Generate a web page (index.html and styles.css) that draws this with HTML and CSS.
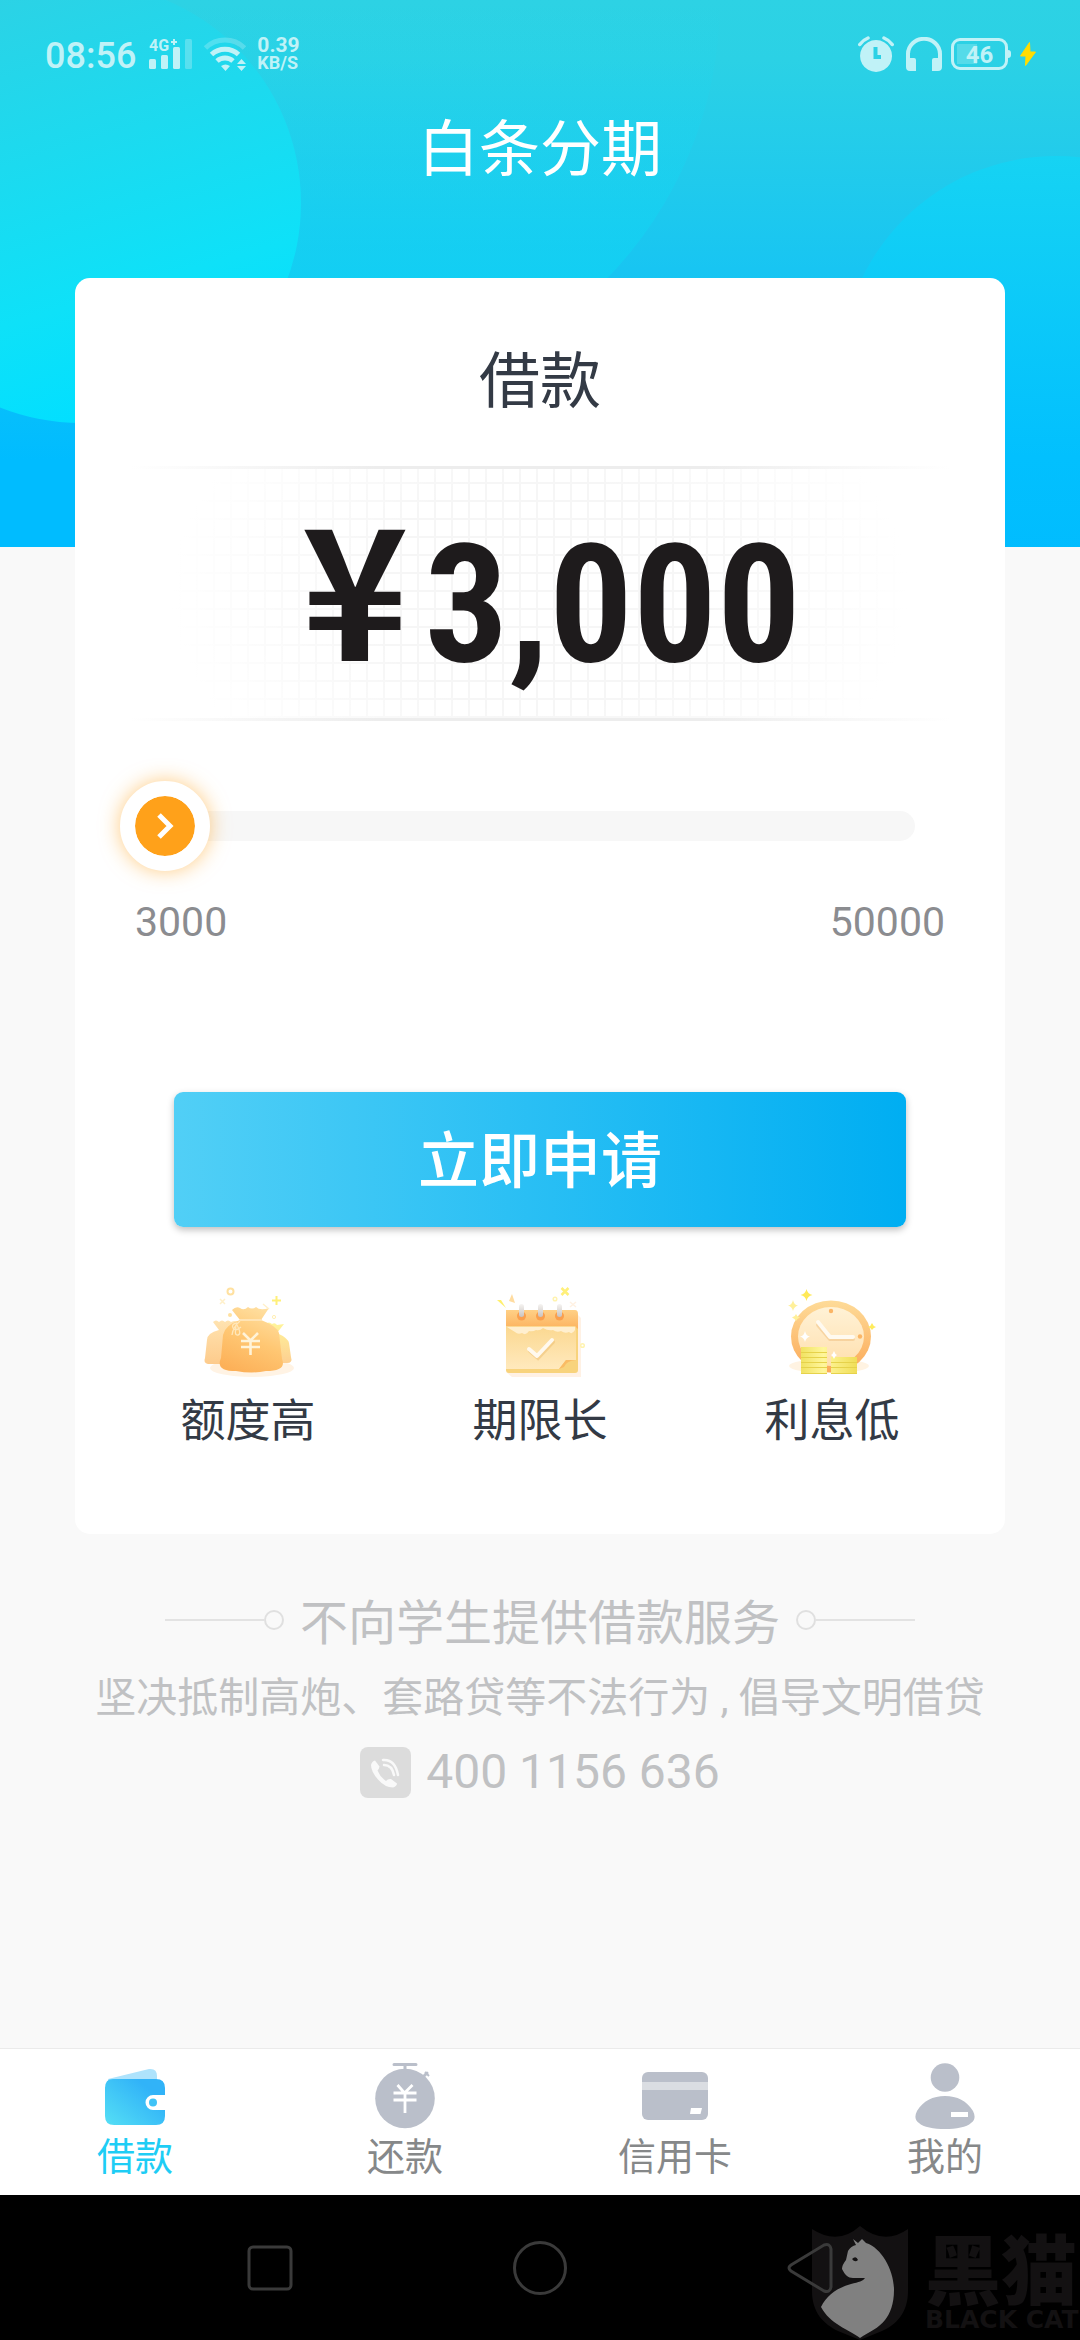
FILE: index.html
```
<!DOCTYPE html>
<html lang="zh-CN">
<head>
  <meta charset="UTF-8">
  <meta name="viewport" content="width=device-width, initial-scale=1">
  <title>白条分期</title>
  <link rel="stylesheet" href="styles.css">
</head>
<body>
  <header class="hero">
    <svg class="hero-bg" viewBox="0 0 1080 547" preserveAspectRatio="xMidYMin slice" aria-hidden="true">
      <defs>
        <linearGradient id="bubbleLeft" x1="0.2" y1="0" x2="0.5" y2="1">
          <stop offset="0.05" stop-color="#2cd2e5"/>
          <stop offset="0.75" stop-color="#0ee1f8"/>
          <stop offset="1" stop-color="#02dfff"/>
        </linearGradient>
        <linearGradient id="bubbleMid" gradientUnits="userSpaceOnUse" x1="0" y1="0" x2="0" y2="300">
          <stop offset="0" stop-color="#18dcf4" stop-opacity="0"/>
          <stop offset="1" stop-color="#0cdaf4" stop-opacity="0.5"/>
        </linearGradient>
        <linearGradient id="bubbleRight" x1="0" y1="0" x2="0" y2="1">
          <stop offset="0" stop-color="#16d3f3"/>
          <stop offset="0.7" stop-color="#02c0fe"/>
          <stop offset="1" stop-color="#00bbff"/>
        </linearGradient>
      </defs>
      <circle cx="320" cy="0" r="400" fill="url(#bubbleMid)"/>
      <circle cx="81" cy="203" r="220" fill="url(#bubbleLeft)"/>
      <circle cx="1056" cy="371" r="215" fill="url(#bubbleRight)"/>
    </svg>

    <div class="status">
      <span class="time">08:56</span>
      <svg class="signal" viewBox="0 0 44 32" aria-hidden="true">
        <text x="0" y="13" class="net-type">4G</text>
        <path d="M22 4h6M25 1v6" stroke="currentColor" stroke-width="2"/>
        <rect x="0" y="21" width="7" height="10" rx="1.5"/>
        <rect x="12" y="17" width="7" height="14" rx="1.5"/>
        <rect x="24" y="9" width="7" height="22" rx="1.5"/>
        <rect x="36" y="1" width="7" height="30" rx="1.5" opacity="0.35"/>
      </svg>
      <svg class="wifi" viewBox="0 0 42 34" aria-hidden="true">
        <g fill="none" stroke="currentColor" stroke-width="5">
          <path d="M1.500 11A28 28 0 0 1 40.500 11" opacity="0.3"/>
          <path d="M7.500 17.500A20 20 0 0 1 34.500 17.500"/>
          <path d="M13 24A12 12 0 0 1 29 24"/>
        </g>
        <path d="M17 29q4.500-3 9 0l-4.500 5zM33 27l4.500-5 4.500 5zM33 29h9l-4.500 5z"/>
      </svg>
      <div class="speed"><span class="rate">0.39</span><span class="unit">KB/S</span></div>
      <div class="status-right">
        <svg class="alarm" viewBox="0 0 36 36" aria-hidden="true">
          <path fill-rule="evenodd" d="M18 4a16 16 0 1 0 .1 0zM15.500 11h4v8h3.500v4h-7.500z"/>
          <path d="M1.800 8.500Q5 4 10 2M34.200 8.500Q31 4 26 2" fill="none" stroke="currentColor" stroke-width="3.500" stroke-linecap="round"/>
        </svg>
        <svg class="headset" viewBox="0 0 36 34" aria-hidden="true">
          <path d="M2 24V17a16 15.200 0 0 1 32 0v7" fill="none" stroke="currentColor" stroke-width="4"/>
          <path d="M0 21h8q2 0 2 2v11H4q-4 0-4-4zM36 21h-8q-2 0-2 2v11h6q4 0 4-4z"/>
        </svg>
        <div class="battery"><span>46</span></div>
        <svg class="bolt" viewBox="0 0 16 24" aria-hidden="true">
          <path d="M9.500 0.500L0.500 14h5.500l-.500 9.500L15.500 10H10z" fill="#ffdc00" stroke="#ffdc00" stroke-linejoin="round"/>
        </svg>
      </div>
    </div>
    <h1>白条分期</h1>
  </header>

  <main>
    <section class="card">
      <h2>借款</h2>
      <div class="amount">
        <span class="yen">¥</span><span class="num">3,000</span>
      </div>

      <div class="range">
        <input type="range" id="loan" min="3000" max="50000" step="100" value="3000" aria-label="借款金额">
        <div class="range-labels"><span>3000</span><span>50000</span></div>
      </div>

      <button class="apply" type="button">立即申请</button>

      <ul class="features">
        <li>
          <svg viewBox="0 0 96 96" aria-hidden="true">
            <defs>
              <linearGradient id="bagFront" x1="0.7" y1="0" x2="0.3" y2="1">
                <stop offset="0" stop-color="#ffe0a2"/>
                <stop offset="0.5" stop-color="#ffc773"/>
                <stop offset="1" stop-color="#fcb058"/>
              </linearGradient>
              <linearGradient id="bagBack" x1="0" y1="0" x2="0" y2="1">
                <stop offset="0" stop-color="#ffe3b0"/>
                <stop offset="1" stop-color="#fdcb8c"/>
              </linearGradient>
              <linearGradient id="bagSide" x1="0" y1="0" x2="0" y2="1">
                <stop offset="0" stop-color="#fff59a"/>
                <stop offset="1" stop-color="#fdcf91"/>
              </linearGradient>
            </defs>
            <ellipse cx="52" cy="84" rx="42" ry="9" fill="#fff3e4"/>
            <path d="M13 38q3-3 6 0q3-3 6 0q3-3 6 0q4-2 8 0l-6 8 6 34H8q-5-1-3-6l2-18q0-7 12-10z" fill="url(#bagBack)"/>
            <path d="M66 40q3-3 6 0q3-2 5 1l7-1-7 9q11 5 12 10l2 14q2 6-4 6H66z" fill="url(#bagSide)"/>
            <path d="M32 26q4-4 8-2q4 3 8-1q4 3 8 0q4 4 13 1l-8 12q16 6 18 13l3 26q5 12-16 12q-14 3-30 0q-21 0-15-13l2-23q2-10 17-15z" fill="url(#bagFront)"/>
            <path d="M40 36h22" stroke="#ffe4b5" stroke-width="2"/>
            <path d="M40 37q-7 6-8 14M37 39q-6 1-4 5t8-1M37 41q5 9 1 10t-2-9" fill="none" stroke="#ffe7ba" stroke-width="1.300"/>
            <path d="M43 49l7.500 7.500L58 49M50.500 56v15M41 57h19M41 63h19" fill="none" stroke="#fff3d8" stroke-width="2.600"/>
            <circle cx="30.500" cy="7.500" r="3" fill="none" stroke="#ffe1a0" stroke-width="2"/>
            <path d="M76.500 12v9M72 16.500h9" stroke="#fff07a" stroke-width="2"/>
            <path d="M20 15l5 5m0-5l-5 5M63 20l6 5" stroke="#fff0ca" stroke-width="1.500"/>
            <circle cx="30" cy="31" r="2" fill="#ffe1a0"/>
            <circle cx="74" cy="33" r="1.600" fill="none" stroke="#fff0b5"/>
          </svg>
          <span>额度高</span>
        </li>
        <li>
          <svg viewBox="0 0 96 96" aria-hidden="true">
            <defs>
              <linearGradient id="calHead" x1="0" y1="0" x2="0" y2="1">
                <stop offset="0" stop-color="#ffd086"/>
                <stop offset="1" stop-color="#fcb25e"/>
              </linearGradient>
              <linearGradient id="calBody" x1="0" y1="0" x2="0" y2="1">
                <stop offset="0" stop-color="#fbd890"/>
                <stop offset="1" stop-color="#ffe9bd"/>
              </linearGradient>
              <linearGradient id="ring" x1="0" y1="0" x2="0" y2="1">
                <stop offset="0" stop-color="#f6f4f2"/>
                <stop offset="1" stop-color="#c9c3bf"/>
              </linearGradient>
            </defs>
            <path d="M20 93h69V34l-4-4v58H14z" fill="#fff1e4"/>
            <path d="M14 42h72v44q0 3-3 3H17q-3 0-3-3z" fill="#f8d37c"/>
            <path d="M14 42h70v43H14z" fill="url(#calBody)"/>
            <path d="M14 26h69q3 0 3 4v15l-3-3H14z" fill="url(#calHead)"/>
            <path d="M15 43h68v3q-3 5-6 2q-4 2-8-1q-4 2-8-1q-5 1-10-2q-3 3-7 2q-3 2-7 1q-3 5-7 2q-4 2-7-1z" fill="#ffefcf"/>
            <circle cx="29.500" cy="32" r="4.500" fill="#fa9f4e"/>
            <circle cx="48.500" cy="32" r="4.500" fill="#fa9f4e"/>
            <circle cx="67.500" cy="32" r="4.500" fill="#fa9f4e"/>
            <rect x="27" y="20" width="5" height="13" rx="2.500" fill="url(#ring)"/>
            <rect x="46" y="20" width="5" height="13" rx="2.500" fill="url(#ring)"/>
            <rect x="65" y="20" width="5" height="13" rx="2.500" fill="url(#ring)"/>
            <path d="M37 65l8 7 15-16" fill="none" stroke="#e8b560" stroke-opacity="0.4" stroke-width="4" stroke-linecap="round" transform="translate(1 2)"/>
            <path d="M37 65l8 7 15-16" fill="none" stroke="#fff9ee" stroke-width="4" stroke-linecap="round" stroke-linejoin="round"/>
            <path d="M67 85l7-9h10v9z" fill="#f8d37c"/>
            <path d="M67 85l7-9h10q-10 1-12 7z" fill="#fabb65"/>
            <path d="M5 16h4l5 8z" fill="#fff06e"/>
            <path d="M20 10l3 9-6-2z" fill="#ffdca0"/>
            <path d="M69.500 4l7 7m0-7l-7 7" stroke="#fff07a" stroke-width="2.500"/>
            <path d="M78 18l6 5m0-5l-6 5" stroke="#fff1e2" stroke-width="1.500"/>
            <circle cx="63" cy="15" r="1.800" fill="none" stroke="#fff3b0" stroke-width="1.500"/>
            <circle cx="90.500" cy="61.500" r="1.800" fill="none" stroke="#fff3b0" stroke-width="1.500"/>
          </svg>
          <span>期限长</span>
        </li>
        <li>
          <svg viewBox="0 0 96 96" aria-hidden="true">
            <defs>
              <linearGradient id="clockRim" x1="0" y1="0" x2="0" y2="1">
                <stop offset="0" stop-color="#fedb98"/>
                <stop offset="1" stop-color="#fba958"/>
              </linearGradient>
              <linearGradient id="clockFace" x1="0" y1="0" x2="0" y2="1">
                <stop offset="0" stop-color="#fff2d6"/>
                <stop offset="1" stop-color="#ffdfae"/>
              </linearGradient>
              <linearGradient id="coin" x1="0" y1="0" x2="1" y2="0">
                <stop offset="0" stop-color="#f1e262"/>
                <stop offset="0.4" stop-color="#fff69b"/>
                <stop offset="1" stop-color="#f0de58"/>
              </linearGradient>
            </defs>
            <ellipse cx="45" cy="82" rx="40" ry="7" fill="#fff3e2"/>
            <ellipse cx="47" cy="52.500" rx="40" ry="36" fill="url(#clockRim)"/>
            <ellipse cx="47" cy="52.500" rx="33" ry="29.500" fill="url(#clockFace)"/>
            <circle cx="47" cy="27" r="2.200" fill="#fbb565"/>
            <circle cx="76" cy="52.500" r="2.200" fill="#fbb565"/>
            <path d="M34 39l12 14h23" fill="none" stroke="#e8ab60" stroke-opacity="0.35" stroke-width="4" stroke-linecap="round" transform="translate(0 2)"/>
            <path d="M34 38l12 15h23" fill="none" stroke="#fffaf0" stroke-width="4" stroke-linecap="round" stroke-linejoin="round"/>
            <path d="M17 63h26v27H17zM47 73h26v17H47z" fill="url(#coin)"/>
            <path d="M17 68.500h26M17 73.500h26M17 78.500h26M17 83.500h26M17 89.500h26M47 78.500h26M47 83.500h26M47 89.500h26" stroke="#e6d24b"/>
            <path d="M22.500 5q1 5 6 6-5 1-6 6-1-5-6-6 5-1 6-6z" fill="#ffe957"/>
            <path d="M9 16q1 5 5 5.500-4 1-5 5.500-1-4.500-5-5.500 4-.500 5-5.500zM12 30q1 3 4 3.500-3 1-4 3.500-1-2.500-4-3.500 3-.500 4-3.500z" fill="#fff099"/>
            <path d="M88 39q1 3 4 4-3 1-4 3-1-2-4-3 3-1 4-4z" fill="#ffec5c"/>
            <path d="M21 47q1 5 5 5.500-4 1-5 5.500-1-4.500-5-5.500 4-.500 5-5.500zM50 67q1 3 3 4-2 1-3 4-1-3-3-4 2-1 3-4z" fill="#fff"/>
          </svg>
          <span>利息低</span>
        </li>
      </ul>
    </section>

    <footer class="notice">
      <p class="notice-title"><i class="rule"></i><span>不向学生提供借款服务</span><i class="rule flip"></i></p>
      <p class="notice-text">坚决抵制高炮、套路贷等不法行为 , 倡导文明借贷</p>
      <a class="phone" href="tel:4001156636">
        <svg viewBox="0 0 51 51" aria-hidden="true">
          <rect width="51" height="51" rx="8" fill="#dcdcdc"/>
          <path d="M11 18q1-4 4-4.500l4.500 6q-.500 3-2 4 2.500 6.500 8.500 10.500 2-2.500 5-2l6 4.500q0 2.500-4 4-8 0-15-8-7-8-7-14.500z" fill="#f9f9f9"/>
          <path d="M23 13q12-1 15 15M24 18q8 0 10 10" fill="none" stroke="#f9f9f9" stroke-width="2.500" stroke-linecap="round"/>
        </svg>
        <span>400 1156 636</span>
      </a>
    </footer>
  </main>

  <nav class="tabs">
    <a class="tab active" href="#loan">
      <svg viewBox="0 0 66 66" aria-hidden="true">
        <defs>
          <linearGradient id="wallet" x1="0" y1="1" x2="0.8" y2="0.3">
            <stop offset="0" stop-color="#55dff5"/>
            <stop offset="1" stop-color="#31b3f8"/>
          </linearGradient>
        </defs>
        <path d="M6 16L47 6q8-1 8 7v5H6z" fill="#aee3fc"/>
        <path d="M11 16h43q9 0 9 9v7H51a7 7 0 0 0 0 15h12v6q0 9-9 9H12q-9 0-9-9V25q0-9 8-9z" fill="url(#wallet)"/>
        <circle cx="51" cy="39.500" r="4" fill="#3fc3f7"/>
      </svg>
      <span>借款</span>
    </a>
    <a class="tab" href="#repay">
      <svg viewBox="0 0 66 66" aria-hidden="true">
        <path d="M22 1.500h22M33 2v6M51 14l4-4" stroke="#babfca" stroke-width="3" stroke-linecap="round"/>
        <path d="M53 9l4 4" stroke="#babfca" stroke-width="2"/>
        <circle cx="33" cy="35.500" r="29.800" fill="#babfca"/>
        <path d="M25.500 22l7 8 8-8M33 30v20M21.500 30h23M21.500 37h23" fill="none" stroke="#fff" stroke-width="2.800"/>
      </svg>
      <span>还款</span>
    </a>
    <a class="tab" href="#card">
      <svg viewBox="0 0 66 66" aria-hidden="true">
        <rect y="9" width="66" height="48" rx="6" fill="#babfca"/>
        <path d="M0 19h66v8H0z" fill="#dadde2"/>
        <path d="M49 45h11l-1.500 6H48z" fill="#fff"/>
      </svg>
      <span>信用卡</span>
    </a>
    <a class="tab" href="#me">
      <svg viewBox="0 0 66 66" aria-hidden="true">
        <circle cx="33" cy="14.500" r="14.300" fill="#babfca"/>
        <path d="M33 33c12 0 22 5 28 15q4 8-2 12c-8 8-44 8-52 0q-6-4-2-12c6-10 16-15 28-15z" fill="#babfca"/>
        <path d="M39 49h17v5H39z" fill="#fff"/>
      </svg>
      <span>我的</span>
    </a>
  </nav>

  <div class="sysnav">
    <button type="button" aria-label="最近任务">
      <svg viewBox="0 0 54 54"><rect x="6" y="6" width="42" height="42" rx="4"/></svg>
    </button>
    <button type="button" aria-label="主屏幕">
      <svg viewBox="0 0 54 54"><circle cx="27" cy="27" r="25.500"/></svg>
    </button>
    <button type="button" aria-label="返回">
      <svg viewBox="0 0 54 54"><path d="M8 24L41 4q6-2 7 4v38q-1 6-7 4L8 30q-4-3 0-6z"/></svg>
    </button>
    <div class="watermark">
      <svg viewBox="0 0 98 114" aria-hidden="true">
        <path d="M1 3q26 17 48-3q24 20 48 3v62c0 22-12 34-26 40l-22 9-22-9C13 98 1 87 1 65z" fill="#131112"/>
        <path d="M42 13l5 4 4-4 4 4c16 5 28 28 28 47 0 14-4 24-9 30-6 8-16 12-25 18-12-9-30-14-39-31 6-12 16-19 30-23 8-2 12-3 14-6H42c-5 0-8-3-11-9q0-4 4-9l2-9q3-5 8-6z" fill="#808080"/>
        <path d="M41 33q4-4 6 1-3 3-6-1z" fill="#131112"/>
      </svg>
      <div class="watermark-text"><b>黑猫</b><small>BLACK CAT</small></div>
    </div>
  </div>

  <script>
    const loan = document.getElementById("loan");
    loan.addEventListener("input", () => {
      document.querySelector(".num").textContent = Number(loan.value).toLocaleString("en-US");
    });
  </script>
</body>
</html>
```
FILE: styles.css
```
* {
  box-sizing: border-box;
}
body {
  margin: 0;
  min-height: 100vh;
  display: flex;
  flex-direction: column;
  background: #f9f9f9;
  color: #333a45;
  font-family: Roboto, "Noto Sans CJK SC", sans-serif;
}
h1, h2, p, ul {
  margin: 0;
  padding: 0;
  font-weight: 400;
}
a {
  color: inherit;
  text-decoration: none;
}
svg {
  display: block;
  flex: none;
}

/* header */
.hero {
  position: relative;
  height: 547px;
  overflow: hidden;
  background: linear-gradient(#2dd2e4 0, #2bd1e5 60px, #18c5f2 270px, #00bcff 460px);
}
.hero-bg {
  position: absolute;
  inset: 0;
  width: 100%;
  height: 100%;
}
.hero h1 {
  position: relative;
  color: #fff;
  font-size: 61px;
  line-height: 84px;
  text-align: center;
}
.status {
  position: relative;
  display: flex;
  align-items: center;
  height: 108px;
  padding: 0 44px 0 45px;
  color: #c0f2f7;
}
.status svg {
  fill: currentColor;
}
.time {
  font-size: 36px;
  font-weight: 500;
  line-height: 40px;
  margin: 4px 13px 0 0;
}
.signal {
  width: 44px;
  height: 32px;
  margin-right: 11px;
  overflow: visible;
}
.net-type {
  font-size: 16px;
  font-weight: 700;
}
.wifi {
  width: 42px;
  height: 34px;
  margin-right: 11px;
}
.speed {
  display: flex;
  flex-direction: column;
  font-weight: 700;
  line-height: 17px;
}
.rate {
  font-size: 21px;
}
.unit {
  font-size: 18px;
}
.status-right {
  display: flex;
  align-items: center;
  margin-left: auto;
}
.alarm {
  width: 36px;
  height: 36px;
  margin-right: 12px;
}
.headset {
  width: 36px;
  height: 34px;
  margin-right: 9px;
}
.battery {
  position: relative;
  width: 57px;
  height: 32px;
  margin-right: 12px;
  border: 3px solid currentColor;
  border-radius: 9px;
  background: linear-gradient(#55dbe9, #55dbe9) 3px 3px / 20px 20px no-repeat;
  font-size: 24px;
  font-weight: 700;
  line-height: 28px;
  text-align: center;
}
.battery::after {
  content: "";
  position: absolute;
  right: -6px;
  top: 9px;
  width: 3px;
  height: 8px;
  border-radius: 0 3px 3px 0;
  background: currentColor;
}
.bolt {
  width: 16px;
  height: 24px;
}

/* loan card */
main {
  flex: 1;
  position: relative;
  margin-top: -269px;
}
.card {
  margin: 0 75px;
  padding: 60px 27px 80px;
  border-radius: 15px;
  background: #fff;
}
.card h2 {
  font-size: 61px;
  line-height: 88px;
  text-align: center;
}
.amount {
  display: flex;
  justify-content: center;
  align-items: baseline;
  height: 255px;
  margin: 40px 28px 0;
  padding-left: 22px;
  color: #1e1b1c;
  font-weight: 700;
  line-height: 232px;
  background:
    linear-gradient(90deg, #fff, #ededed 30%, #ededed 70%, #fff) top / 100% 3px no-repeat,
    linear-gradient(90deg, #fff, #ededed 30%, #ededed 70%, #fff) bottom / 100% 3px no-repeat,
    radial-gradient(ellipse 50% 110% at center, transparent 40%, #fff 90%),
    repeating-linear-gradient(90deg, transparent 0, transparent 15px, #f6f6f6 15px, #f6f6f6 17px),
    repeating-linear-gradient(transparent 0, transparent 16px, #f6f6f6 16px, #f6f6f6 18px);
}
.yen {
  font-family: "Noto Sans CJK SC", sans-serif;
  font-size: 182px;
  margin-right: 16px;
}
.num {
  font-family: "Roboto Condensed", "Liberation Sans Narrow", Roboto, sans-serif;
  font-size: 166px;
}
.range {
  margin: 60px 33px 0;
}
.range input {
  appearance: none;
  display: block;
  width: calc(100% - 15px);
  height: 90px;
  margin: 0 0 0 -15px;
  background: none;
}
.range input::-webkit-slider-runnable-track {
  height: 30px;
  border-radius: 15px;
  background: #f7f7f7;
}
.range input::-webkit-slider-thumb {
  appearance: none;
  width: 90px;
  height: 90px;
  margin-top: -30px;
  border: 15px solid #fff;
  border-radius: 50%;
  background: #ffa11a url("data:image/svg+xml,%3Csvg xmlns='http://www.w3.org/2000/svg' viewBox='0 0 60 60'%3E%3Cpath d='M24 19l11 11-11 11' fill='none' stroke='%23fff' stroke-width='5'/%3E%3C/svg%3E") center / 60px 60px no-repeat padding-box;
  box-shadow: 0 0 20px rgba(255, 161, 26, 0.55);
}
.range-labels {
  display: flex;
  justify-content: space-between;
  margin-top: 27px;
  color: #8b8c90;
  font-size: 41px;
  line-height: 48px;
}
.apply {
  display: block;
  width: calc(100% - 144px);
  height: 135px;
  margin: 146px auto 0;
  padding: 4px 0 0;
  border: 0;
  border-radius: 9px;
  background: linear-gradient(90deg, #51cff6, #00aef2);
  box-shadow: 0 3px 7px rgba(0, 0, 0, 0.25);
  color: #fff;
  font: 500 61px/88px Roboto, "Noto Sans CJK SC", sans-serif;
}
.features {
  display: grid;
  grid-template-columns: repeat(3, 1fr);
  margin-top: 57px;
  list-style: none;
}
.features li {
  display: flex;
  flex-direction: column;
  align-items: center;
  gap: 10px;
  font-size: 45px;
  line-height: 64px;
}
.features svg {
  width: 96px;
  height: 96px;
}

/* notice under the card */
.notice {
  display: flex;
  flex-direction: column;
  align-items: center;
  padding: 50px 24px;
  color: #c0c1c3;
}
.notice-title {
  display: flex;
  align-items: center;
  gap: 16px;
  font-size: 48px;
  line-height: 72px;
}
.notice-title span {
  padding-top: 4px;
  margin-bottom: -4px;
}
.rule {
  display: flex;
  align-items: center;
  width: 119px;
}
.rule::before {
  content: "";
  flex: 1;
  height: 2px;
  background: #e3e3e3;
}
.rule::after {
  content: "";
  width: 16px;
  height: 16px;
  border: 2px solid #e0e0e0;
  border-radius: 50%;
}
.flip {
  flex-direction: row-reverse;
}
.notice-text {
  margin-top: 12px;
  font-size: 41px;
  line-height: 60px;
}
.phone {
  display: flex;
  align-items: center;
  gap: 15px;
  margin-top: 16px;
  font-size: 48px;
  line-height: 56px;
}
.phone svg {
  width: 51px;
  height: 51px;
}

/* bottom tabs */
.tabs {
  display: grid;
  grid-template-columns: repeat(4, 1fr);
  border-top: 1px solid #ebebeb;
  background: #fff;
}
.tab {
  display: flex;
  flex-direction: column;
  align-items: center;
  padding: 14px 0 10px;
  color: #868889;
  font-size: 38px;
  line-height: 56px;
}
.tab svg {
  width: 66px;
  height: 66px;
}
.active {
  color: #1ecdf5;
}
.sysnav {
  position: relative;
  display: flex;
  justify-content: center;
  align-items: center;
  gap: 216px;
  height: 145px;
  background: #000;
  overflow: hidden;
}
.sysnav button {
  position: relative;
  z-index: 1;
  width: 54px;
  height: 54px;
  padding: 0;
  border: 0;
  background: none;
}
.sysnav button svg {
  fill: none;
  stroke: #3a3a3a;
  stroke-width: 3;
}
.watermark {
  position: absolute;
  right: 0;
  bottom: 0;
  display: flex;
  gap: 16px;
  color: #131112;
}
.watermark svg {
  width: 98px;
  height: 114px;
}
.watermark-text {
  display: flex;
  flex-direction: column;
  width: 155px;
}
.watermark-text b {
  font-family: "Noto Sans CJK SC", sans-serif;
  font-size: 76px;
  font-weight: 900;
  line-height: 80px;
}
.watermark-text small {
  font: 700 25px/28px "DejaVu Sans", sans-serif;
  white-space: nowrap;
}
```
